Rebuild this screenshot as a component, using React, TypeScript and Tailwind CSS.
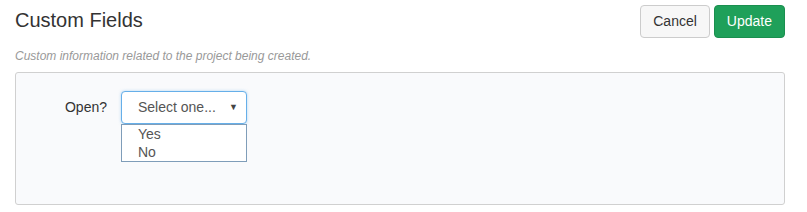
export default function App() {
  return (
    <div className="w-[807px] h-[212px] bg-white font-['Liberation_Sans',Arial,sans-serif] text-[#333]">
      <div className="flex items-start justify-between pl-[15px] pr-[22px] pt-[5px]">
        <h1 className="text-[20px] leading-[28px] pt-[1px]">Custom Fields</h1>
        <div className="flex gap-[4px]">
          <button className="h-[33px] px-[12px] text-[14px] border border-[#ccc] rounded-[4px] bg-[#f7f7f7] text-[#333]">
            Cancel
          </button>
          <button className="h-[33px] px-[12px] text-[14px] border border-[#1a8f4f] rounded-[4px] bg-[#1fa05a] text-white">
            Update
          </button>
        </div>
      </div>
      <p className="pl-[15px] mt-[10px] text-[12px] italic text-[#999] leading-[16px]">
        Custom information related to the project being created.
      </p>
      <div className="ml-[15px] mr-[22px] mt-[8px] h-[133px] border border-[#d0d0d0] rounded-[3px] bg-[#f9fafc] pt-[18px]">
        <div className="flex items-start">
          <label className="w-[91px] text-right text-[14px] text-[#333] leading-[32px]">Open?</label>
          <div className="ml-[14px] w-[126px]">
            <div className="h-[33px] flex items-center justify-between border border-[#66afe9] rounded-[4px] bg-white pl-[16px] pr-[8px] shadow-[0_0_3px_rgba(102,175,233,0.5)]">
              <span className="text-[14px] text-[#555]">Select one...</span>
              <span className="text-[9px] text-[#444]">▼</span>
            </div>
            <ul className="border border-[#7f9db9] bg-white pl-[16px] text-[14px] text-[#555] leading-[18px]">
              <li>Yes</li>
              <li>No</li>
            </ul>
          </div>
        </div>
      </div>
    </div>
  );
}
